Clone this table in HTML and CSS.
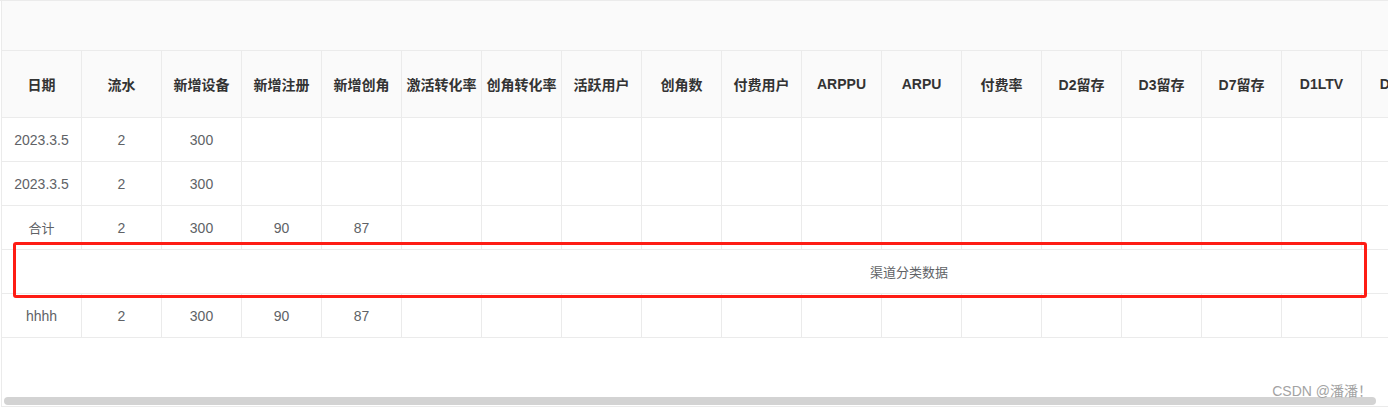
FILE: index.html
```html
<!DOCTYPE html>
<html lang="zh-CN">
<head>
<meta charset="utf-8">
<title>渠道数据表</title>
<link rel="stylesheet" href="styles.css">
</head>
<body>
<div class="page">
  <div class="panel">
    <div class="title-band"></div>
    <div class="scroll">
      <table class="grid">
        <thead>
          <tr>
            <th>日期</th><th>流水</th><th>新增设备</th><th>新增注册</th><th>新增创角</th><th>激活转化率</th><th>创角转化率</th><th>活跃用户</th><th>创角数</th><th>付费用户</th><th>ARPPU</th><th>ARPU</th><th>付费率</th><th>D2留存</th><th>D3留存</th><th>D7留存</th><th>D1LTV</th><th>D3LTV</th><th>D7LTV</th><th>D15LTV</th>
          </tr>
        </thead>
        <tbody>
          <tr><td>2023.3.5</td><td>2</td><td>300</td><td></td><td></td><td></td><td></td><td></td><td></td><td></td><td></td><td></td><td></td><td></td><td></td><td></td><td></td><td></td><td></td><td></td></tr>
          <tr><td>2023.3.5</td><td>2</td><td>300</td><td></td><td></td><td></td><td></td><td></td><td></td><td></td><td></td><td></td><td></td><td></td><td></td><td></td><td></td><td></td><td></td><td></td></tr>
          <tr><td class="cn">合计</td><td>2</td><td>300</td><td>90</td><td>87</td><td></td><td></td><td></td><td></td><td></td><td></td><td></td><td></td><td></td><td></td><td></td><td></td><td></td><td></td><td></td></tr>
          <tr><td class="channel" colspan="20">渠道分类数据</td></tr>
          <tr><td>hhhh</td><td>2</td><td>300</td><td>90</td><td>87</td><td></td><td></td><td></td><td></td><td></td><td></td><td></td><td></td><td></td><td></td><td></td><td></td><td></td><td></td><td></td></tr>
        </tbody>
      </table>
    </div>
    <div class="scrollbar"><div class="thumb"></div></div>
    <div class="highlight"></div>
    <div class="watermark">CSDN @潘潘！</div>
  </div>
</div>
</body>
</html>
```
FILE: styles.css
```css
html, body {
  margin: 0;
  padding: 0;
  background: #ffffff;
}

body {
  width: 1388px;
  height: 407px;
  overflow: hidden;
  font-family: "Liberation Sans", Arial, "Noto Sans CJK SC", sans-serif;
}

.page {
  border-top: 1px solid #ebebeb;
  width: 1388px;
}

.panel {
  position: relative;
  margin-left: 1px;
  border-left: 1px solid #ebebeb;
  border-bottom: 1px solid #ebebeb;
}

.title-band {
  height: 49px;
  background: #fafafa;
  border-bottom: 1px solid #ebebeb;
}

.scroll {
  height: 346px;
  overflow: hidden;
}

.grid {
  border-collapse: separate;
  border-spacing: 0;
  table-layout: fixed;
  width: 1600px;
}

.grid th,
.grid td {
  box-sizing: border-box;
  width: 80px;
  padding: 0;
  border-right: 1px solid #ebebeb;
  border-bottom: 1px solid #ebebeb;
  text-align: center;
  white-space: nowrap;
  overflow: hidden;
}

.grid th {
  height: 67px;
  background: #fafafa;
  color: #333333;
  font-size: 14px;
  font-weight: bold;
  font-family: "Liberation Sans", Arial, "Noto Sans CJK SC", sans-serif;
}

.grid td {
  height: 44px;
  color: #606266;
  font-size: 14px;
}

.grid td.cn {
  font-size: 13px;
}

.grid td.channel {
  text-align: left;
  padding-left: 868px;
  font-size: 13px;
  color: #606266;
}

.scrollbar {
  height: 9px;
  padding-left: 2px;
}

.thumb {
  width: 1372px;
  height: 8px;
  border-radius: 4px;
  background: #d3d3d3;
}

.highlight {
  position: absolute;
  left: 11px;
  top: 241px;
  width: 1354px;
  height: 56px;
  box-sizing: border-box;
  border: 3px solid #fe1c14;
  border-radius: 3px;
  pointer-events: none;
}

.watermark {
  position: absolute;
  right: 16px;
  bottom: 6px;
  font-size: 14px;
  color: #a3a3a3;
  font-family: "Liberation Sans", "Noto Sans CJK SC", sans-serif;
}
```
